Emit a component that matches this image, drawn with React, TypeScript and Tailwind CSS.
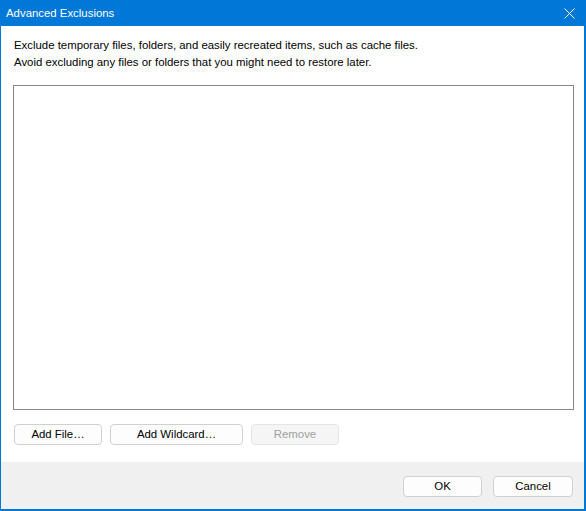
const font = { fontFamily: '"Segoe UI", "Liberation Sans", Arial, sans-serif' };

function Button({ label, width, disabled }: { label: string; width: string; disabled?: boolean }) {
  return (
    <button
      disabled={disabled}
      className={`${width} h-[21px] rounded-[4px] border text-[11.4px] leading-none ${
        disabled
          ? 'border-[#e5e5e5] bg-[#f5f5f5] text-[#a0a0a0]'
          : 'border-[#d0d0d0] bg-[#fdfdfd] text-black'
      }`}
    >
      {label}
    </button>
  );
}

export default function App() {
  return (
    <div className="w-[586px] h-[511px] flex flex-col bg-[#0078d7] text-black" style={font}>
      {/* Title bar */}
      <div className="h-[26px] flex items-center justify-between pl-[6px] pr-[11px] pt-px text-white text-[11.4px]">
        <span>Advanced Exclusions</span>
        <svg width="11" height="11" viewBox="0 0 11 11" fill="none" stroke="white" strokeWidth="1">
          <path d="M0.5 0.5 L10.5 10.5 M10.5 0.5 L0.5 10.5" />
        </svg>
      </div>

      {/* Body */}
      <div className="flex-1 ml-px mr-[2px] mb-[2px] flex flex-col bg-white">
        <div className="flex-1 flex flex-col pt-[11px] pl-[12px] pr-[10px]">
          <div className="pl-px text-[11.4px] leading-[17px]">
            <p>Exclude temporary files, folders, and easily recreated items, such as cache files.</p>
            <p>Avoid excluding any files or folders that you might need to restore later.</p>
          </div>
          <div className="mt-[14px] h-[325px] border border-[#828790] bg-white" />
          <div className="mt-[14px] pl-px flex gap-[8px]">
            <Button label="Add File…" width="w-[88px]" />
            <Button label="Add Wildcard…" width="w-[133px]" />
            <Button label="Remove" width="w-[88px]" disabled />
          </div>
        </div>

        {/* Footer */}
        <div className="h-[47px] bg-[#f0f0f0] flex justify-end gap-[11px] pt-[14px] pr-[11px]">
          <Button label="OK" width="w-[79px]" />
          <Button label="Cancel" width="w-[80px]" />
        </div>
      </div>
    </div>
  );
}
